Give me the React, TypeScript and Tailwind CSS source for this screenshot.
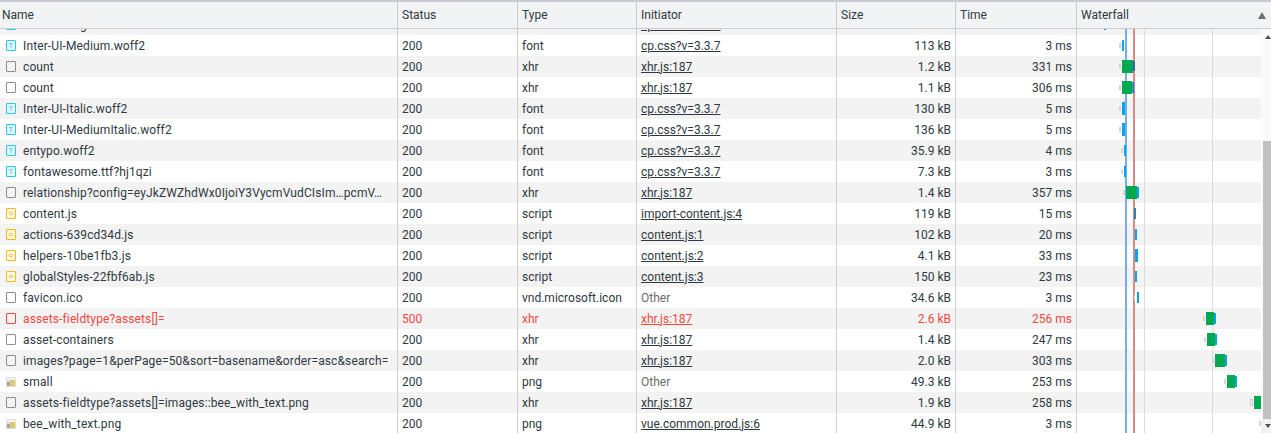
import React from "react";

type Kind = "font" | "doc" | "script" | "img" | "err";
type Row = { n: string; s: string; t: string; i: string; link: boolean; z: string; d: string; k: Kind };

const rows: Row[] = [
  { n: "Inter-UI-Regular.woff2", s: "200", t: "font", i: "cp.css?v=3.3.7", link: true, z: "111 kB", d: "3 ms", k: "font" },
  { n: "Inter-UI-Medium.woff2", s: "200", t: "font", i: "cp.css?v=3.3.7", link: true, z: "113 kB", d: "3 ms", k: "font" },
  { n: "count", s: "200", t: "xhr", i: "xhr.js:187", link: true, z: "1.2 kB", d: "331 ms", k: "doc" },
  { n: "count", s: "200", t: "xhr", i: "xhr.js:187", link: true, z: "1.1 kB", d: "306 ms", k: "doc" },
  { n: "Inter-UI-Italic.woff2", s: "200", t: "font", i: "cp.css?v=3.3.7", link: true, z: "130 kB", d: "5 ms", k: "font" },
  { n: "Inter-UI-MediumItalic.woff2", s: "200", t: "font", i: "cp.css?v=3.3.7", link: true, z: "136 kB", d: "5 ms", k: "font" },
  { n: "entypo.woff2", s: "200", t: "font", i: "cp.css?v=3.3.7", link: true, z: "35.9 kB", d: "4 ms", k: "font" },
  { n: "fontawesome.ttf?hj1qzi", s: "200", t: "font", i: "cp.css?v=3.3.7", link: true, z: "7.3 kB", d: "3 ms", k: "font" },
  { n: "relationship?config=eyJkZWZhdWx0IjoiY3VycmVudCIsIm…pcmV…", s: "200", t: "xhr", i: "xhr.js:187", link: true, z: "1.4 kB", d: "357 ms", k: "doc" },
  { n: "content.js", s: "200", t: "script", i: "import-content.js:4", link: true, z: "119 kB", d: "15 ms", k: "script" },
  { n: "actions-639cd34d.js", s: "200", t: "script", i: "content.js:1", link: true, z: "102 kB", d: "20 ms", k: "script" },
  { n: "helpers-10be1fb3.js", s: "200", t: "script", i: "content.js:2", link: true, z: "4.1 kB", d: "33 ms", k: "script" },
  { n: "globalStyles-22fbf6ab.js", s: "200", t: "script", i: "content.js:3", link: true, z: "150 kB", d: "23 ms", k: "script" },
  { n: "favicon.ico", s: "200", t: "vnd.microsoft.icon", i: "Other", link: false, z: "34.6 kB", d: "3 ms", k: "doc" },
  { n: "assets-fieldtype?assets[]=", s: "500", t: "xhr", i: "xhr.js:187", link: true, z: "2.6 kB", d: "256 ms", k: "err" },
  { n: "asset-containers", s: "200", t: "xhr", i: "xhr.js:187", link: true, z: "1.4 kB", d: "247 ms", k: "doc" },
  { n: "images?page=1&perPage=50&sort=basename&order=asc&search=", s: "200", t: "xhr", i: "xhr.js:187", link: true, z: "2.0 kB", d: "303 ms", k: "doc" },
  { n: "small", s: "200", t: "png", i: "Other", link: false, z: "49.3 kB", d: "253 ms", k: "img" },
  { n: "assets-fieldtype?assets[]=images::bee_with_text.png", s: "200", t: "xhr", i: "xhr.js:187", link: true, z: "1.9 kB", d: "258 ms", k: "doc" },
  { n: "bee_with_text.png", s: "200", t: "png", i: "vue.common.prod.js:6", link: true, z: "44.9 kB", d: "3 ms", k: "img" },
];

function FileIcon({ k }: { k: Kind }) {
  if (k === "font")
    return (
      <svg width="10" height="11" viewBox="0 0 10 11" className="shrink-0">
        <rect x="0.5" y="0.5" width="9" height="10" rx="0.5" fill="#e6f7fd" stroke="#22cbe9" />
        <path d="M3 3h4v1.2H5.6V8H4.4V4.2H3z" fill="#7fd4ee" />
      </svg>
    );
  if (k === "script")
    return (
      <svg width="10" height="11" viewBox="0 0 10 11" className="shrink-0">
        <rect x="0.5" y="0.5" width="9" height="10" rx="0.5" fill="#fff9ea" stroke="#f6b90f" />
        <ellipse cx="5" cy="5.5" rx="2" ry="1.3" fill="none" stroke="#f6c445" />
      </svg>
    );
  if (k === "img")
    return (
      <svg width="10" height="10" viewBox="0 0 10 10" className="shrink-0">
        <rect width="10" height="10" fill="#e0e0e0" />
        <rect x="1" y="1" width="8" height="2" fill="#f2f2f2" />
        <rect x="4" y="3" width="5" height="6" fill="#ddc873" />
        <rect x="1" y="5" width="3" height="4" fill="#a8a8a8" />
      </svg>
    );
  return (
    <svg width="10" height="11" viewBox="0 0 10 11" className="shrink-0">
      <rect x="0.5" y="0.5" width="9" height="10" rx="0.5" fill="none" stroke={k === "err" ? "#f0483e" : "#8e8e8e"} />
    </svg>
  );
}

// [x, y, w, h, fill]
const bars: [number, number, number, number, string][] = [
  [27, 0, 2, 1, "#00a6f0"],
  [42, 14, 2, 5, "#d6d6d6"], [45, 11, 2, 11, "#00a6f0"],
  [42, 35, 2, 5, "#d6d6d6"], [56, 32, 2, 10, "#3f5fa8"], [45, 31, 11, 13, "#00a84f"],
  [42, 56, 2, 5, "#d6d6d6"], [55, 53, 1, 11, "#00a6f0"], [56, 53, 1, 11, "#3f6fa8"], [45, 52, 10, 13, "#00a84f"],
  [42, 77, 2, 5, "#d6d6d6"], [45, 73, 3, 13, "#00a6f0"],
  [42, 98, 2, 5, "#d6d6d6"], [45, 94, 3, 13, "#00a6f0"],
  [44, 119, 2, 5, "#d6d6d6"], [47, 116, 2, 11, "#00a6f0"],
  [44, 140, 2, 5, "#d6d6d6"], [47, 137, 2, 11, "#00a6f0"],
  [46, 161, 2, 5, "#d6d6d6"], [60, 158, 2, 11, "#00a6f0"], [49, 157, 11, 13, "#00a84f"],
  [57, 179, 2, 11, "#2f7fb5"],
  [58, 200, 2, 11, "#00a6f0"],
  [58, 220, 3, 13, "#00a6f0"],
  [58, 242, 2, 11, "#00a6f0"],
  [57, 266, 1, 5, "#d6d6d6"], [60, 263, 2, 11, "#00a6f0"],
  [126, 287, 2, 5, "#d6d6d6"], [137, 284, 2, 11, "#00a6f0"], [129, 283, 8, 13, "#00a84f"],
  [127, 308, 2, 5, "#d6d6d6"], [138, 305, 2, 11, "#00a6f0"], [130, 304, 8, 13, "#00a84f"],
  [135, 329, 2, 5, "#d6d6d6"], [148, 326, 2, 11, "#00a6f0"], [138, 325, 10, 13, "#00a84f"],
  [147, 350, 2, 5, "#d6d6d6"], [158, 347, 2, 11, "#00a6f0"], [150, 346, 8, 13, "#00a84f"],
  [177, 367, 7, 13, "#00a84f"],
  [182, 392, 2, 5, "#d6d6d6"],
];

function Waterfall() {
  return (
    <svg width="184" height="404" viewBox="0 0 184 404" className="absolute left-[1077px] top-0">
      <rect x="67" y="0" width="1" height="404" fill="#dcdcdc" />
      <rect x="135" y="0" width="1" height="404" fill="#dcdcdc" />
      <rect x="48" y="0" width="2" height="404" fill="#77ace6" />
      <rect x="56" y="0" width="2" height="404" fill="#d98a86" />
      <rect x="173.5" y="370.5" width="2" height="6" fill="none" stroke="#cfcfcf" />
      {bars.map(([x, y, w, h, c], i) => (
        <rect key={i} x={x} y={y} width={w} height={h} fill={c} />
      ))}
    </svg>
  );
}

const cols = "grid grid-cols-[398px_120px_119px_200px_119px_121px_1fr]";
const cell = "h-full border-r border-[#d0d0d0] px-1 overflow-hidden whitespace-nowrap flex items-center";

export default function App() {
  return (
    <div
      className="w-[1271px] h-[433px] overflow-hidden bg-white flex flex-col text-[12px] text-[#303942] border-t-2 border-[#c9cad0]"
      style={{ fontFamily: 'Roboto, sans-serif' }}
    >
      <div className={`${cols} h-[27px] shrink-0 bg-[#f1f3f4] border-b border-[#cdcdcd]`}>
        {["Name", "Status", "Type", "Initiator", "Size", "Time"].map((h) => (
          <div key={h} className="h-full border-r border-[#cdcdcd] px-1 first:pl-[2px] flex items-center">{h}</div>
        ))}
        <div className="h-full pl-1 pr-[5px] flex items-center justify-between">
          <span>Waterfall</span>
          <svg width="8" height="7" viewBox="0 0 8 7"><path d="M4 0l4 7H0z" fill="#6e6e6e" /></svg>
        </div>
      </div>
      <div className="relative flex-1 flex overflow-hidden">
        <div className="w-[1261px] shrink-0 -mt-[15px] relative">
          {rows.map((r, idx) => {
            const red = r.k === "err";
            return (
              <div
                key={idx}
                className={`${cols} h-[21px] ${idx % 2 === 0 ? "bg-[#f3f3f3]" : "bg-white"} ${red ? "text-[#f0483e]" : ""}`}
              >
                <div className={`${cell} gap-[7px] pl-[6px]`}>
                  <FileIcon k={r.k} />
                  <span className="overflow-hidden tracking-[0.12px]">{r.n}</span>
                </div>
                <div className={cell}>{r.s}</div>
                <div className={cell}>{r.t}</div>
                <div className={cell}>
                  {r.link ? <span className="underline">{r.i}</span> : <span className="text-[#6b6b6b]">{r.i}</span>}
                </div>
                <div className={`${cell} justify-end`}>{r.z}</div>
                <div className={`${cell} justify-end`}>{r.d}</div>
                <div className="h-full" />
              </div>
            );
          })}
        </div>
        <Waterfall />
        <div className="w-[10px] shrink-0 bg-[#fafafa] flex flex-col items-end">
          <div className="h-[112px] w-full flex justify-end pt-[6px]">
            <svg width="6" height="4" viewBox="0 0 6 4"><path d="M3 0l3 4H0z" fill="#505050" /></svg>
          </div>
          <div className="h-[278px] w-[8px] bg-[#c1c1c1]" />
          <div className="flex-1 w-full bg-[#f1f1f1] flex justify-end pt-[5px]">
            <svg width="6" height="4" viewBox="0 0 6 4"><path d="M0 0h6L3 4z" fill="#505050" /></svg>
          </div>
        </div>
      </div>
    </div>
  );
}
